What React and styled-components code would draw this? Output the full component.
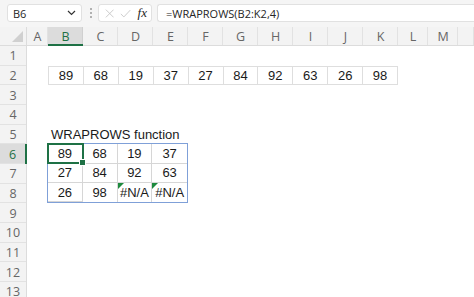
import React from 'react';
import styled, { createGlobalStyle } from 'styled-components';

const GlobalStyle = createGlobalStyle`
  html, body {
    margin: 0;
    padding: 0;
    background: #ffffff;
    overflow: hidden;
  }
  * {
    box-sizing: border-box;
  }
`;

const Page = styled.div`
  width: 474px;
  height: 297px;
  overflow: hidden;
  background: #ffffff;
  font-family: "Liberation Sans", Arial, sans-serif;
`;

const Toolbar = styled.div`
  display: flex;
  align-items: center;
  height: 27px;
  padding: 0 0 1px 7px;
  background: #f5f5f5;
`;

const NameBox = styled.div`
  display: flex;
  align-items: center;
  justify-content: space-between;
  width: 75px;
  height: 18px;
  padding: 0 5px 0 5px;
  background: #ffffff;
  border: 1px solid #e1e1e1;
  border-radius: 3px;
  font-family: "Open Sans", "Liberation Sans", sans-serif;
  font-size: 11px;
  color: #262626;
`;

const Dots = styled.div`
  display: flex;
  flex-direction: column;
  gap: 2px;
  margin: 0 6px 0 8px;

  span {
    width: 2px;
    height: 2px;
    border-radius: 50%;
    background: #9a9a9a;
  }
`;

const FxBox = styled.div`
  display: flex;
  align-items: center;
  gap: 6px;
  width: 54px;
  height: 18px;
  padding: 0 4px 0 6px;
  background: #ffffff;
  border: 1px solid #e1e1e1;
  border-radius: 3px;
`;

const FxLabel = styled.span`
  margin-left: auto;
  font-family: "Liberation Serif", "Times New Roman", serif;
  font-style: italic;
  font-size: 13px;
  color: #262626;
`;

const FormulaBox = styled.div`
  flex: 1;
  display: flex;
  align-items: center;
  height: 18px;
  margin-left: 5px;
  padding-left: 8px;
  background: #ffffff;
  border: 1px solid #e1e1e1;
  border-right: none;
  border-radius: 3px 0 0 3px;
  font-family: "Open Sans", "Liberation Sans", sans-serif;
  font-size: 11px;
  color: #262626;
`;

const Sheet = styled.div`
  display: grid;
  grid-template-columns: 27px 21px repeat(10, 35px) 30px 30px 1fr;
  grid-template-rows: 19px repeat(13, 19.67px);
`;

const Corner = styled.div`
  grid-row: 1;
  grid-column: 1;
  position: relative;
  background: #f3f3f3;
  border-right: 1px solid #dcdcdc;
  border-bottom: 1px solid #dcdcdc;

  &::after {
    content: '';
    position: absolute;
    right: 3px;
    bottom: 3px;
    border-style: solid;
    border-width: 0 0 11px 11px;
    border-color: transparent transparent #d0d0d0 transparent;
  }
`;

const ColHeader = styled.div`
  grid-row: 1;
  display: flex;
  align-items: center;
  justify-content: center;
  background: ${p => (p.$active ? '#dcdcdc' : '#f3f3f3')};
  border-bottom: ${p => (p.$active ? '2px solid #1e7145' : '1px solid #dcdcdc')};
  box-shadow: inset -1px 0 0 ${p => (p.$active ? '#d0d0d0' : '#e2e2e2')};
  font-family: "Open Sans", "Noto Sans", sans-serif;
  font-size: 12.5px;
  color: ${p => (p.$active ? '#1e7145' : '#666666')};
  padding-top: ${p => (p.$active ? '1px' : '0')};
`;

const RowHeader = styled.div`
  grid-column: 1;
  display: flex;
  align-items: center;
  justify-content: center;
  background: ${p => (p.$active ? '#dcdcdc' : '#f3f3f3')};
  border-right: ${p => (p.$active ? '2px solid #1e7145' : '1px solid #dcdcdc')};
  box-shadow: inset 0 -1px 0 #e2e2e2;
  font-family: "Open Sans", "Noto Sans", sans-serif;
  font-size: 12.5px;
  color: ${p => (p.$active ? '#1e7145' : '#666666')};
`;

const DataRange = styled.div`
  grid-row: 3;
  grid-column: 3 / span 10;
  display: grid;
  grid-template-columns: repeat(10, 1fr);
  border-top: 1px solid #dedede;
  border-left: 1px solid #dedede;
`;

const Cell = styled.div`
  position: relative;
  display: flex;
  align-items: center;
  justify-content: center;
  border-right: 1px solid ${p => p.$line || '#dedede'};
  border-bottom: 1px solid ${p => p.$line || '#dedede'};
  font-size: 13px;
  color: #1a1a1a;
`;

const Title = styled.div`
  grid-row: 6;
  grid-column: 3 / span 5;
  display: flex;
  align-items: flex-end;
  padding: 0 0 2px 3px;
  font-size: 13px;
  color: #1a1a1a;
  white-space: nowrap;
`;

const SpillRange = styled.div`
  grid-row: 7 / span 3;
  grid-column: 3 / span 4;
  position: relative;
  display: grid;
  grid-template-columns: repeat(4, 1fr);
  grid-template-rows: repeat(3, 1fr);
  border: 1px solid #7fa0d8;
  margin: -1px 0 0 -1px;

  & > ${Cell}:nth-child(4n) {
    border-right: none;
  }
  & > ${Cell}:nth-last-child(-n + 4) {
    border-bottom: none;
  }
`;

const ActiveCell = styled.div`
  position: absolute;
  left: -1px;
  top: -1px;
  width: 37px;
  height: 21px;
  border: 2px solid #1e7145;
  pointer-events: none;

  &::after {
    content: '';
    position: absolute;
    right: -4px;
    bottom: -4px;
    width: 5px;
    height: 5px;
    background: #1e7145;
    border: 1px solid #ffffff;
  }
`;

const ErrorFlag = styled.span`
  position: absolute;
  left: 0;
  top: 0;
  border-style: solid;
  border-width: 6px 6px 0 0;
  border-color: #1e8a3e transparent transparent transparent;
`;

const CancelIcon = () => (
  <svg width="11" height="11" viewBox="0 0 11 11">
    <path d="M1 1 L10 10 M10 1 L1 10" stroke="#c4c4c4" strokeWidth="1" fill="none" />
  </svg>
);

const EnterIcon = () => (
  <svg width="13" height="11" viewBox="0 0 13 11">
    <path d="M1 6 L4.5 9.5 L12 1.5" stroke="#c4c4c4" strokeWidth="1" fill="none" />
  </svg>
);

const Chevron = () => (
  <svg width="9" height="6" viewBox="0 0 9 6">
    <path d="M1 1 L4.5 4.5 L8 1" stroke="#333333" strokeWidth="1.2" fill="none" />
  </svg>
);

const columns = ['A', 'B', 'C', 'D', 'E', 'F', 'G', 'H', 'I', 'J', 'K', 'L', 'M', ''];
const values = [89, 68, 19, 37, 27, 84, 92, 63, 26, 98];
const spill = [89, 68, 19, 37, 27, 84, 92, 63, 26, 98, '#N/A', '#N/A'];

export default function App() {
  return (
    <Page>
      <GlobalStyle />
      <Toolbar>
        <NameBox>
          B6
          <Chevron />
        </NameBox>
        <Dots>
          <span />
          <span />
          <span />
        </Dots>
        <FxBox>
          <CancelIcon />
          <EnterIcon />
          <FxLabel>fx</FxLabel>
        </FxBox>
        <FormulaBox>=WRAPROWS(B2:K2,4)</FormulaBox>
      </Toolbar>

      <Sheet>
        <Corner />
        {columns.map((c, i) => (
          <ColHeader key={i} $active={c === 'B'} style={{ gridColumn: i + 2 }}>
            {c}
          </ColHeader>
        ))}
        {Array.from({ length: 13 }, (_, i) => (
          <RowHeader key={i} $active={i + 1 === 6} style={{ gridRow: i + 2 }}>
            {i + 1}
          </RowHeader>
        ))}

        <DataRange>
          {values.map((v, i) => (
            <Cell key={i}>{v}</Cell>
          ))}
        </DataRange>

        <Title>WRAPROWS function</Title>

        <SpillRange>
          {spill.map((v, i) => (
            <Cell key={i} $line="#d6d6d6">
              {v === '#N/A' && <ErrorFlag />}
              {v}
            </Cell>
          ))}
          <ActiveCell />
        </SpillRange>
      </Sheet>
    </Page>
  );
}
